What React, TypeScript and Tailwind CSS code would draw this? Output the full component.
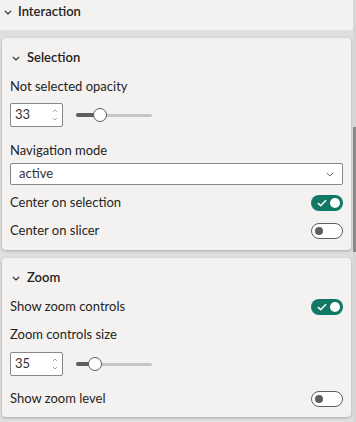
import type { ReactNode } from "react";

function Chevron({ color = "#252423", width = 1.1 }: { color?: string; width?: number }) {
  return (
    <svg width="8" height="5" viewBox="0 0 8 5" className="shrink-0">
      <path d="M0.8 0.8 L4 4 L7.2 0.8" fill="none" stroke={color} strokeWidth={width} />
    </svg>
  );
}

function Toggle({ on }: { on: boolean }) {
  if (on) {
    return (
      <div className="flex h-[16px] w-[32px] shrink-0 items-center justify-between rounded-full bg-[#117865] pl-[6px] pr-[3px]">
        <svg width="10" height="8" viewBox="0 0 10 8">
          <path d="M1 4.2 L3.7 6.7 L9 1.3" fill="none" stroke="#fff" strokeWidth="1.6" />
        </svg>
        <div className="h-[10px] w-[10px] rounded-full bg-white" />
      </div>
    );
  }
  return (
    <div className="flex h-[16px] w-[32px] shrink-0 items-center rounded-full border border-[#605e5c] bg-white pl-[3px]">
      <div className="h-[8px] w-[8px] rounded-full bg-[#605e5c]" />
    </div>
  );
}

function NumberSlider({ value, pct }: { value: number; pct: number }) {
  return (
    <div className="flex h-[24px] shrink-0 items-center gap-[13px]">
      <div className="flex h-[24px] w-[53px] items-center justify-between rounded-[2px] border border-[#8a8886] bg-white pl-[4px] pr-[4px]">
        <span className="text-[13px] text-[#323130]">{value}</span>
        <svg width="6" height="14" viewBox="0 0 6 14">
          <path d="M1 4 L3 2 L5 4" fill="none" stroke="#a19f9d" strokeWidth="0.9" />
          <path d="M1 10 L3 12 L5 10" fill="none" stroke="#a19f9d" strokeWidth="0.9" />
        </svg>
      </div>
      <div className="relative flex h-[16px] w-[76px] items-center">
        <div className="h-[3px] w-full rounded-full bg-[#c8c6c4]" />
        <div
          className="absolute left-0 h-[4px] rounded-full bg-[#605e5c]"
          style={{ width: `${pct}%` }}
        />
        <div
          className="absolute h-[14px] w-[14px] -translate-x-1/2 rounded-full border border-[#605e5c] bg-white"
          style={{ left: `${pct}%` }}
        />
      </div>
    </div>
  );
}

function Label({ text, className = "" }: { text: string; className?: string }) {
  return (
    <div className={`flex h-[18px] shrink-0 items-center text-[13px] text-[#252423] ${className}`}>
      {text}
    </div>
  );
}

function Row({ label, className = "", children }: { label: string; className?: string; children: ReactNode }) {
  return (
    <div className={`flex h-[18px] shrink-0 items-center justify-between ${className}`}>
      <span className="text-[13px] text-[#252423]">{label}</span>
      {children}
    </div>
  );
}

function Card({ title, className = "", children }: { title: string; className?: string; children: ReactNode }) {
  return (
    <div
      className={`mx-[2px] flex shrink-0 flex-col rounded-[4px] bg-[#f3f2f1] px-[8px] shadow-[0_1px_3px_rgba(0,0,0,0.25)] ${className}`}
    >
      <div className="flex h-[40px] shrink-0 items-center gap-[7px] pl-[2px]">
        <Chevron />
        <span className="text-[13px] font-semibold text-[#252423]">{title}</span>
      </div>
      {children}
    </div>
  );
}

export default function App() {
  return (
    <div
      className="flex h-[422px] w-[356px] overflow-hidden bg-[#e1dfdd]"
      style={{ fontFamily: 'Lato, "Noto Sans", sans-serif' }}
    >
      <div className="flex flex-1 flex-col">
        <div className="flex h-[30px] shrink-0 items-center gap-[6px] bg-[#f3f2f1] pl-[4px] pb-[6px]">
          <Chevron />
          <span className="text-[13px] font-semibold text-[#252423]">Interaction</span>
        </div>
        <div className="flex shrink-0 flex-col gap-[8px] pt-[8px]">
          <Card title="Selection" className="pb-[10px]">
            <Label text="Not selected opacity" />
            <div className="mt-[7px]">
              <NumberSlider value={33} pct={31} />
            </div>
            <Label text="Navigation mode" className="mt-[15px]" />
            <div className="mt-[3px] flex h-[22px] shrink-0 items-center justify-between rounded-[2px] border border-[#8a8886] bg-white pl-[8px] pr-[8px]">
              <span className="text-[13px] text-[#323130]">active</span>
              <Chevron color="#605e5c" width={0.9} />
            </div>
            <Row label="Center on selection" className="mt-[9px]">
              <Toggle on />
            </Row>
            <Row label="Center on slicer" className="mt-[10px]">
              <Toggle on={false} />
            </Row>
          </Card>
          <Card title="Zoom" className="pb-[9px]">
            <Row label="Show zoom controls">
              <Toggle on />
            </Row>
            <Label text="Zoom controls size" className="mt-[10px]" />
            <div className="mt-[8px]">
              <NumberSlider value={35} pct={25} />
            </div>
            <Row label="Show zoom level" className="mt-[14px]">
              <Toggle on={false} />
            </Row>
          </Card>
        </div>
      </div>
      <div className="flex w-[3px] shrink-0 flex-col bg-[#d6d6d6]">
        <div className="h-[127px] shrink-0" />
        <div className="h-[125px] shrink-0 bg-[#8a8886]" />
      </div>
    </div>
  );
}
